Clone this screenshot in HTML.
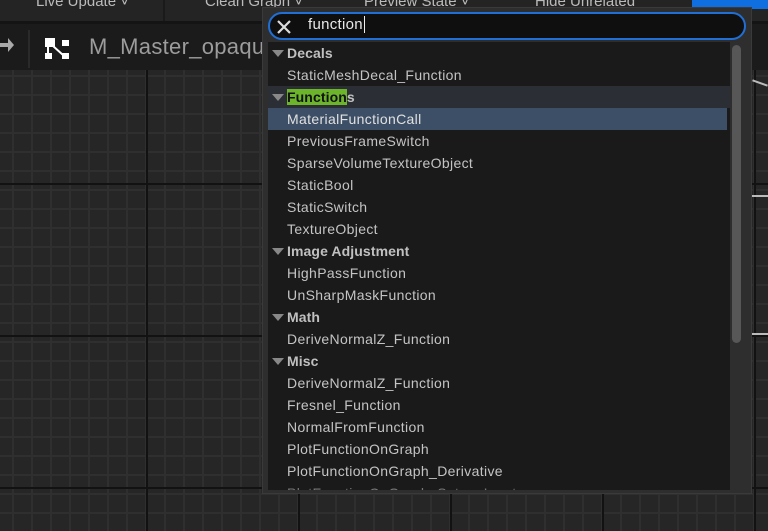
<!DOCTYPE html><html><head><style>
*{margin:0;padding:0;box-sizing:border-box}
body{width:768px;height:531px;overflow:hidden;position:relative;font-family:"Liberation Sans",sans-serif;
background-color:#262626;
background-image:
linear-gradient(90deg,#121212 0,#121212 2px,transparent 2px),
linear-gradient(0deg,#121212 0,#121212 2px,transparent 2px),
linear-gradient(90deg,#2f2f2f 0,#2f2f2f 2px,transparent 2px),
linear-gradient(0deg,#2f2f2f 0,#2f2f2f 2px,transparent 2px);
background-size:152px 152px,152px 152px,19px 19px,19px 19px;
background-position:146px 0,0 489px,12px 0,0 1px;}
.abs{position:absolute}
.tb{left:0;top:0;width:768px;height:21px;background:#242424}
.tab{left:0;top:21px;width:768px;height:49px;background:#1b1b1b;border-top:3px solid #141414}
.tb span{position:absolute;top:-7px;color:#bbb;font-size:15px}
.pop{left:262px;top:7px;width:490px;height:487px;background:#2e2e2e;border:1px solid #3a3a3a}
.search{left:268px;top:12px;width:478px;height:28px;background:#0f0f0f;border:2px solid #1f6fd6;border-radius:14px}
.list{left:268px;top:42px;width:462px;height:448px;background:#1a1a1a;overflow:hidden}
.row{height:22px;line-height:22px;font-size:14px;letter-spacing:0.35px;color:#c4c4c4;padding-left:19px;white-space:nowrap;position:relative}
.h{font-weight:bold;color:#c0c0c0;letter-spacing:0.1px}
.h:before{content:"";position:absolute;left:4px;top:8px;border-left:6px solid transparent;border-right:6px solid transparent;border-top:7px solid #888}
.sel{background:#3d4f66;color:#e0e0e0}
.fh{background:#2b2f35}
.hl{background:#6cb52b;color:#111}
.sb{left:732px;top:45px;width:9px;height:298px;background:#575757;border-radius:5px}
</style></head><body>
<div class="abs tb"><span style="left:36px">Live Update ˅</span><span style="left:205px">Clean Graph ˅</span><span style="left:364px">Preview State ˅</span><span style="left:535px">Hide Unrelated</span>
<div class="abs" style="left:692px;top:0;width:76px;height:9px;background:#0f6fe0"></div>
<div class="abs" style="left:163px;top:0;width:2px;height:21px;background:#1a1a1a"></div></div>
<div class="abs tab">
<div class="abs" style="left:0;top:19px;width:10px;height:4px;background:#aaa"></div>
<div class="abs" style="left:8px;top:14px;border-left:6px solid #aaa;border-top:7px solid transparent;border-bottom:7px solid transparent"></div>
<div class="abs" style="left:28px;top:6px;width:2px;height:38px;background:#2a2a2a"></div>
<svg class="abs" style="left:44px;top:12px" width="26" height="24"><rect x="1" y="2" width="10" height="9" fill="#fff"/><rect x="18" y="4" width="7" height="6" fill="#fff"/><rect x="1" y="17" width="7" height="6" fill="#fff"/><rect x="18" y="17" width="7" height="6" fill="#fff"/><path d="M4 10 L4 18 M9 10 L19 19" stroke="#fff" stroke-width="2"/></svg>
<div class="abs" style="left:89px;top:10px;font-size:22px;letter-spacing:0.3px;color:#9c9c9c">M_Master_opaque</div>
</div>
<div class="abs pop"></div>
<div class="abs search">
<svg class="abs" style="left:5px;top:4px" width="18" height="18"><path d="M3 3L15 15M15 3L3 15" stroke="#ddd" stroke-width="2.2"/></svg>
<div class="abs" style="left:38px;top:2px;font-size:15px;letter-spacing:0.3px;color:#e8e8e8">function<span style="border-left:1px solid #eee;margin-left:1px"></span></div>
</div>
<div class="abs list">
<div class="row h">Decals</div>
<div class="row">StaticMeshDecal_Function</div>
<div class="row h fh"><span class="hl">Function</span>s</div>
<div class="row sel" style="width:459px">MaterialFunctionCall</div>
<div class="row">PreviousFrameSwitch</div>
<div class="row">SparseVolumeTextureObject</div>
<div class="row">StaticBool</div>
<div class="row">StaticSwitch</div>
<div class="row">TextureObject</div>
<div class="row h">Image Adjustment</div>
<div class="row">HighPassFunction</div>
<div class="row">UnSharpMaskFunction</div>
<div class="row h">Math</div>
<div class="row">DeriveNormalZ_Function</div>
<div class="row h">Misc</div>
<div class="row">DeriveNormalZ_Function</div>
<div class="row">Fresnel_Function</div>
<div class="row">NormalFromFunction</div>
<div class="row">PlotFunctionOnGraph</div>
<div class="row">PlotFunctionOnGraph_Derivative</div>
<div class="row" style="color:#777">PlotFunctionOnGraph_Setup_Input</div>
</div>
<div class="abs sb"></div>
<div class="abs" style="left:752px;top:82px;width:16px;height:2px;background:#bbb;transform:rotate(20deg)"></div>
<div class="abs" style="left:752px;top:195px;width:16px;height:2px;background:#bbb"></div>
<div class="abs" style="left:752px;top:333px;width:16px;height:2px;background:#bbb"></div>
</body></html>
